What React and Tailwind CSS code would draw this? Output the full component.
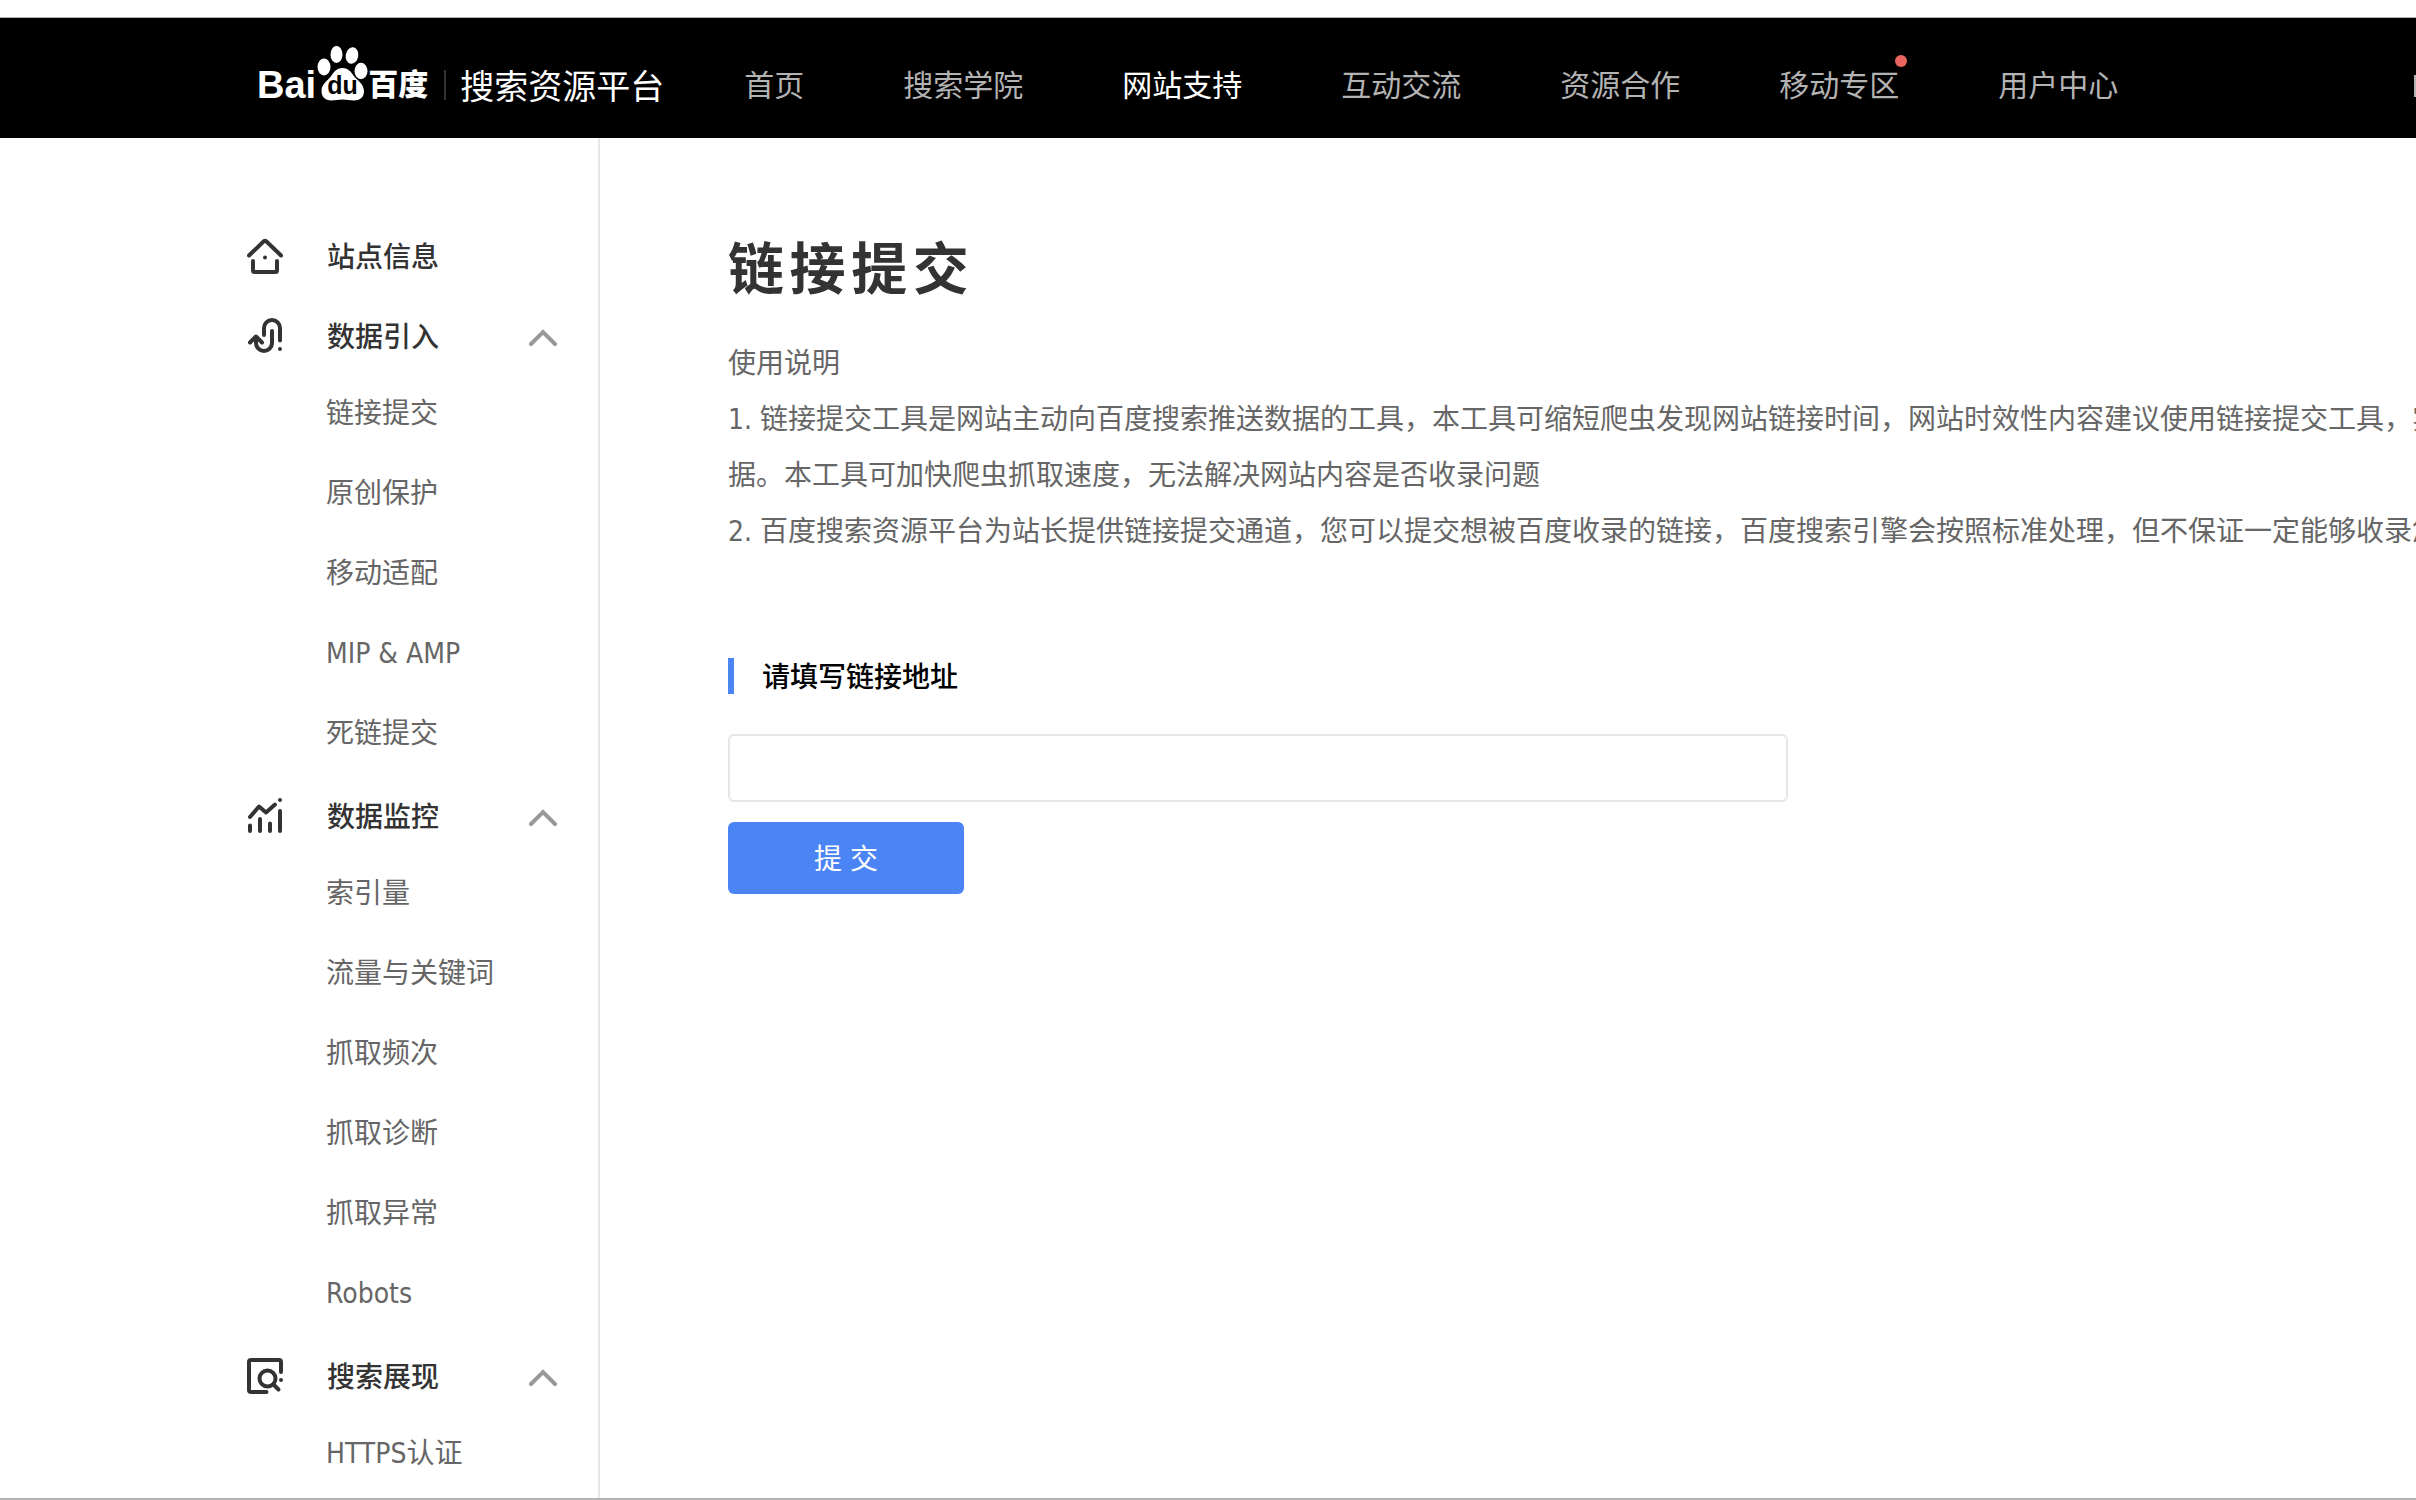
const NAV = [
  { label: '首页' },
  { label: '搜索学院' },
  { label: '网站支持', active: true },
  { label: '互动交流' },
  { label: '资源合作' },
  { label: '移动专区', dot: true },
  { label: '用户中心' },
];

function HomeIcon() {
  return (
    <svg viewBox="0 0 36 36" className="mb-1 size-9" fill="none" stroke="#333" strokeWidth="4" strokeLinecap="round" strokeLinejoin="round" aria-hidden="true">
      <path d="M2 17.5 16.8 3.2q1.2-1 2.4 0L34 17.5" />
      <path d="M6 23v9.5q0 1.500 1.500 1.500h21q1.500 0 1.500-1.500V23" />
      <circle cx="18" cy="19.500" r="2" fill="#333" stroke="none" />
    </svg>
  );
}

function ImportIcon() {
  return (
    <svg viewBox="0 0 36 36" className="mb-1 size-9" fill="none" stroke="#333" strokeWidth="4" strokeLinecap="round" strokeLinejoin="round" aria-hidden="true">
      <path d="M33 22.500V10a8 8 0 0 0-16 0v7" />
      <path d="M25 13v12a8 8 0 0 1-16 0v-6" />
      <path d="M3 24.500 9 18.500l6 6" />
      <circle cx="33" cy="31" r="2" fill="#333" stroke="none" />
    </svg>
  );
}

function MonitorIcon() {
  return (
    <svg viewBox="0 0 36 36" className="mb-1 size-9" fill="none" stroke="#333" strokeWidth="4" strokeLinecap="round" strokeLinejoin="round" aria-hidden="true">
      <path d="M3 19 12 8.500l7 6L28 6.500" />
      <path d="M3 27.500V33M13 21v12M23 25.500V33M33 13v20" />
      <circle cx="33" cy="2" r="2" fill="#333" stroke="none" />
    </svg>
  );
}

function DisplayIcon() {
  return (
    <svg viewBox="0 0 36 36" className="mb-1 size-9" fill="none" stroke="#333" strokeWidth="4" strokeLinecap="round" strokeLinejoin="round" aria-hidden="true">
      <path d="M34 14V4q0-2-2-2H4Q2 2 2 4v28q0 2 2 2h15.500" />
      <circle cx="20.500" cy="20.500" r="8" />
      <path d="m26.500 26.500 5 5" />
      <circle cx="34" cy="22" r="2" fill="#333" stroke="none" />
    </svg>
  );
}

const GROUPS = [
  { title: '站点信息', Icon: HomeIcon },
  { title: '数据引入', Icon: ImportIcon, items: ['链接提交', '原创保护', '移动适配', 'MIP & AMP', '死链提交'] },
  { title: '数据监控', Icon: MonitorIcon, items: ['索引量', '流量与关键词', '抓取频次', '抓取诊断', '抓取异常', 'Robots'] },
  { title: '搜索展现', Icon: DisplayIcon, items: ['HTTPS认证'] },
];

function Paw() {
  return (
    <svg viewBox="-1 0 52 56" className="mb-1 h-14 w-[52px]" fill="#fff" aria-hidden="true">
      <ellipse cx="7" cy="21" rx="6.500" ry="8.500" />
      <ellipse cx="19.500" cy="8.500" rx="6" ry="8.500" />
      <ellipse cx="35" cy="9.500" rx="6.300" ry="8.300" transform="rotate(10 35 9.500)" />
      <ellipse cx="44" cy="25" rx="6.500" ry="8.300" />
      <path d="M25.500 22c5 0 8.500 3.500 11 7.500 3 4.500 10.500 8 10.500 16 0 6-4.500 9-10 9-4.500 0-7-1-11.500-1s-6.500 1-11.500 1c-5.500 0-9.500-3.500-9.500-9.500 0-8 7-10.500 10-15.500 2.500-4 6-7.500 11-7.500z" />
      <text x="25.500" y="48" textAnchor="middle" fontSize="25" fontWeight="700" fill="#000" fontFamily="Liberation Sans, sans-serif">du</text>
    </svg>
  );
}

function Logo() {
  return (
    <a href="#" className="flex h-14 items-end text-white">
      <span className="font-['Liberation_Sans',sans-serif] text-[38px] leading-[42px] font-bold">Bai</span>
      <Paw />
      <span className="text-[30px] leading-[42px] font-black">百度</span>
      <span className="mr-3.5 mb-1.5 ml-4 h-[30px] w-0.5 bg-[#333]" />
      <span className="mb-0.5 text-[34px] leading-[34px]">搜索资源平台</span>
    </a>
  );
}

function Chevron() {
  return (
    <svg viewBox="0 0 28 18" className="h-[18px] w-7" fill="none" stroke="#999" strokeWidth="4" strokeLinecap="round" aria-hidden="true">
      <path d="M2 15 14 3l12 12" />
    </svg>
  );
}

function Sidebar() {
  return (
    <aside className="w-[600px] shrink-0 border-r-2 border-[#e6e6e6] pt-[76px] pr-[41px] pl-[247px]">
      {GROUPS.map(({ title, Icon, items }) => (
        <section key={title} className="pt-2">
          <button type="button" className="flex h-[72px] w-full items-center text-left text-[28px] font-medium text-[#333]">
            <Icon />
            <span className="ml-11 flex-1">{title}</span>
            {items && <Chevron />}
          </button>
          {items && (
            <ul className="pl-[79px] text-[28px] text-[#666]">
              {items.map((item) => (
                <li key={item} className="flex h-20 items-center">
                  <a href="#">{item}</a>
                </li>
              ))}
            </ul>
          )}
        </section>
      ))}
    </aside>
  );
}

export default function App() {
  return (
    <div className="flex h-screen flex-col overflow-hidden border-b-2 border-[#b3b3b3] bg-white font-['DejaVu_Sans_Condensed','Noto_Sans_CJK_SC',sans-serif]">
      <header className="mt-[17px] flex h-[121px] shrink-0 items-center border-t border-[#b3b3b3] bg-black pl-[257px] whitespace-nowrap">
        <Logo />
        <nav className="flex flex-1 items-center gap-[99px] pt-3.5 pl-20 text-[30px] text-[#b3b3b3]">
          {NAV.map(({ label, active, dot }) => (
            <a key={label} href="#" className={active ? 'relative text-white' : 'relative'}>
              {label}
              {dot && <span className="absolute -top-2 -right-2 size-3 rounded-full bg-[#ea6460]" />}
            </a>
          ))}
        </nav>
        <span className="mt-4 h-[22px] w-0.5 bg-[#b3b3b3]" />
      </header>
      <div className="flex min-h-0 flex-1 overflow-hidden">
        <Sidebar />
        <main className="min-w-0 flex-1 pt-[92px] pl-32">
          <h1 className="text-[56px] leading-[80px] font-bold tracking-widest text-[#333]">链接提交</h1>
          <div className="mt-[26px] text-[28px] leading-[56px] whitespace-nowrap text-[#666]">
            <p>使用说明</p>
            <p>
              1. 链接提交工具是网站主动向百度搜索推送数据的工具，本工具可缩短爬虫发现网站链接时间，网站时效性内容建议使用链接提交工具，实
              <br />
              据。本工具可加快爬虫抓取速度，无法解决网站内容是否收录问题
            </p>
            <p>2. 百度搜索资源平台为站长提供链接提交通道，您可以提交想被百度收录的链接，百度搜索引擎会按照标准处理，但不保证一定能够收录您</p>
          </div>
          <form className="mt-[98px]">
            <label htmlFor="link-url" className="flex h-9 items-center gap-7 text-[28px] leading-9 font-medium text-black">
              <span className="h-9 w-1.5 bg-[#4a84f5]" />
              <span className="pt-1">请填写链接地址</span>
            </label>
            <input id="link-url" type="text" className="mt-10 block h-[68px] w-full max-w-[1060px] rounded-md border-2 border-[#e6e6e6] px-5 text-[28px] outline-none" />
            <button type="button" className="mt-5 h-[72px] w-[236px] rounded-md bg-[#4a84f5] pt-1 text-[28px] text-white">提 交</button>
          </form>
        </main>
      </div>
    </div>
  );
}
